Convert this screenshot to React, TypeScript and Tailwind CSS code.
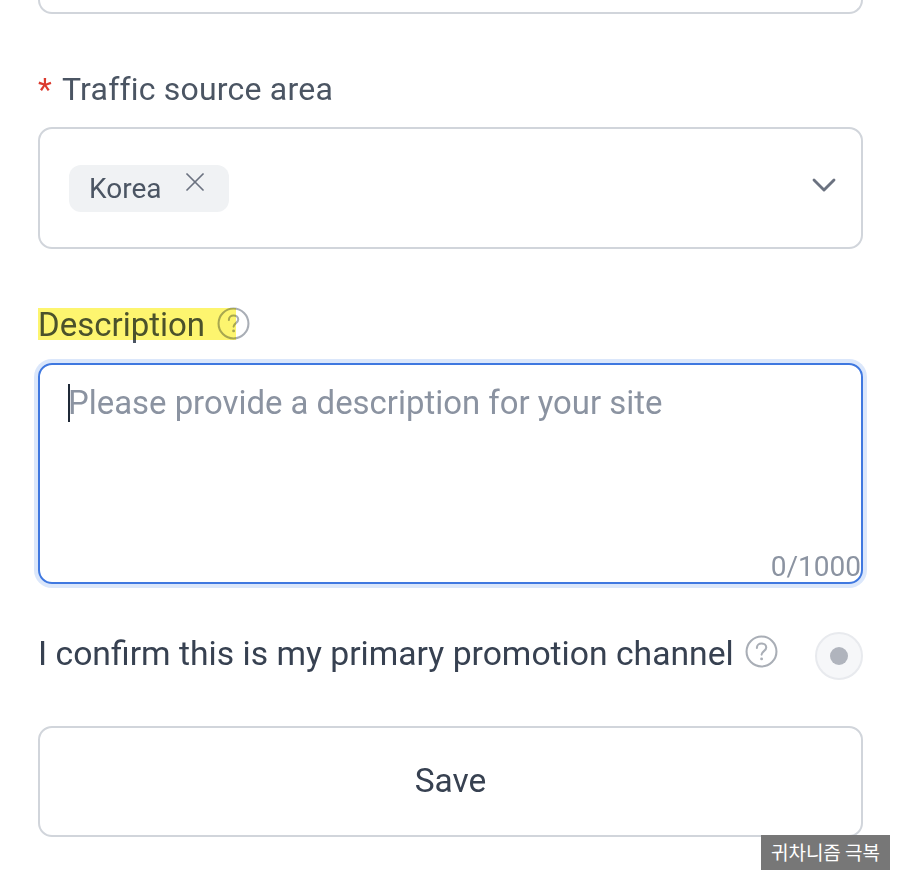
import { useState } from 'react'
import { ChevronDown, X } from 'lucide-react'

function HelpIcon({ className }: { className: string }) {
  return (
    <svg viewBox="0 0 32 32" fill="none" className={className}>
      <circle cx="16" cy="16" r="14.5" stroke="#a9aeb6" strokeWidth="2" />
      <path d="M11.5 12.5c0-2.6 2-4.3 4.6-4.3s4.5 1.6 4.5 3.9c0 3.4-4.5 3.6-4.5 6.9" stroke="#a9aeb6" strokeWidth="2" strokeLinecap="round" />
      <circle cx="16.1" cy="23.2" r="1.4" fill="#a9aeb6" />
    </svg>
  )
}

export default function App() {
  const [description, setDescription] = useState('')

  return (
    <div className="relative h-[880px] w-[900px] overflow-hidden bg-white font-['Roboto',sans-serif] text-[#4b5563]">
      <div className="flex flex-col pl-[38px] pr-[37px]">
        <div className="h-[14px] rounded-b-[14px] border-x-2 border-b-2 border-[#d1d5db]" />

        <div className="mt-[56px] flex h-[38px] items-center text-[32px] tracking-[0.2px]">
          <span className="mr-[10px] text-[#dc3a2e]">*</span>
          Traffic source area
        </div>
        <div className="mt-[19px] flex h-[122px] items-center justify-between rounded-[14px] border-2 border-[#d1d5db] pl-[29px] pr-[17px]">
          <div className="flex h-[47px] w-[160px] items-center rounded-[12px] bg-[#f0f2f4] pl-[20px] text-[28px]">
            <span className="mt-[1px]">Korea</span>
            <X size={32} strokeWidth={1.3} className="mb-[13px] ml-[18px] text-[#6b7280]" />
          </div>
          <ChevronDown size={40} strokeWidth={1.7} className="mb-[6px] text-[#6b7280]" />
        </div>

        <div className="relative mt-[56px] flex h-[38px] items-center pt-[2px] text-[33px]">
          <span>Description</span>
          <HelpIcon className="mb-[4px] ml-[12px] h-[33px] w-[33px]" />
          <div className="absolute left-0 top-[3px] h-[32px] w-[198px] bg-[#fdf56f] mix-blend-multiply" />
        </div>
        <div className="relative mt-[20px] h-[221px] rounded-[14px] border-2 border-[#3f78e0] shadow-[0_0_0_4px_#dbe7fb]">
          <textarea
            value={description}
            onChange={(e) => setDescription(e.target.value)}
            placeholder="Please provide a description for your site"
            className="h-full w-full resize-none bg-transparent pl-[28px] pt-[19px] text-[32.9px] leading-[38px] caret-[#1f2937] outline-none placeholder:text-[#8b93a1]"
          />
          <div className="absolute left-[28px] top-[19px] h-[38px] w-[2px] bg-[#1f2937]" />
          <span className="absolute bottom-[-4px] right-0 text-[28px] leading-[38px] text-[#8b93a1]">0/1000</span>
        </div>

        <div className="mt-[44px] flex h-[50px] items-center justify-between">
          <div className="flex items-center pt-[2px] text-[33.7px] text-[#374151]">
            I confirm this is my primary promotion channel
            <HelpIcon className="mb-[6px] ml-[11px] h-[33px] w-[33px]" />
          </div>
          <div className="mt-[6px] flex h-[48px] w-[48px] items-center justify-center rounded-full border-2 border-[#e8eaee] bg-[#f6f7f9]">
            <div className="h-[18px] w-[18px] rounded-full bg-[#b0b4bd]" />
          </div>
        </div>

        <button className="mt-[48px] flex h-[111px] items-center justify-center rounded-[14px] border-2 border-[#d1d5db] bg-white text-[33.5px] text-[#374151]">
          Save
        </button>
      </div>

      <div className="absolute left-[761px] top-[835px] flex h-[35px] w-[129px] items-center justify-center bg-[#777777] font-['Noto_Sans_CJK_KR',sans-serif] text-[19px] text-white">
        귀차니즘 극복
      </div>
    </div>
  )
}
